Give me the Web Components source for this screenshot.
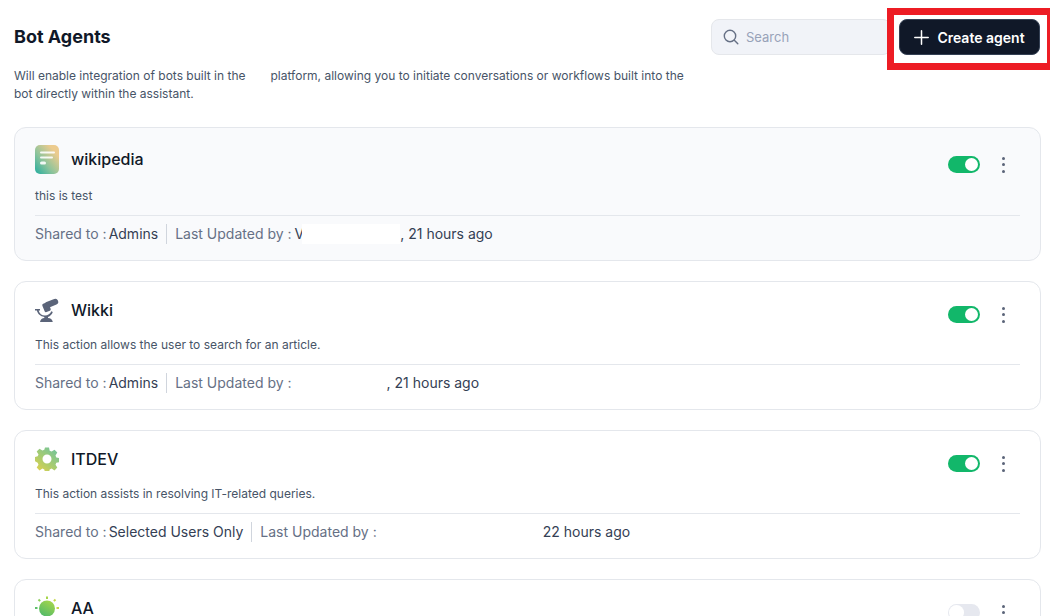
<!DOCTYPE html>
<html><head><meta charset="utf-8"><style>
html,body{margin:0;height:616px;overflow:hidden;background:#fff;font-family:Inter,"Liberation Sans",sans-serif}
</style></head><body>
<agents-page>
<page-header slot="header"></page-header>
<agent-card name="wikipedia" desc="this is test" shared="Admins" featured on>
  <svg slot="icon" width="24" height="29" viewBox="0 0 24 29"><defs><linearGradient id="g1" x1="1" y1="0" x2="0" y2="1"><stop offset=".2" stop-color="#eccb8e"/><stop offset=".6" stop-color="#8fc49b"/><stop offset="1" stop-color="#22ac9f"/></linearGradient></defs><rect width="24" height="29" rx="5" fill="url(#g1)"/><g fill="none" stroke="#fff" stroke-linecap="round" opacity=".9"><path d="M6 7.5h13" stroke-width="2"/><path d="M6 12.5h11" stroke-width="2"/><path d="M6.500 18h3" stroke-width="3"/></g></svg>
  <span slot="updated">V<i-redact w="98" tall></i-redact>, 21 hours ago</span>
</agent-card>
<agent-card name="Wikki" desc="This action allows the user to search for an article." shared="Admins" on>
  <svg slot="icon" width="24" height="24" viewBox="0 0 24 24" fill="#5b6479"><rect x="9.500" y="2.500" width="14" height="6" rx="2.800" transform="rotate(-22 16 5.500)"/><rect x="8.500" y="5" width="6.500" height="9" rx="1.500" transform="rotate(-22 11 10)"/><path d="M0 11h5v1.600H3.600c.7 3 3.200 5 6.400 5 2.800 0 5.400-1.800 6.300-4.300l1.500.6c-.8 2.300-2.600 4.100-4.800 5v1.200c2.500.3 4.300 1.300 4.800 3.900H5c.5-2.600 2.300-3.600 4.300-3.900v-1.100C5.500 18.500 2.600 16 1.900 12.600H0z"/></svg>
  <span slot="updated"><i-redact w="92"></i-redact>, 21 hours ago</span>
</agent-card>
<agent-card name="ITDEV" desc="This action assists in resolving IT-related queries." shared="Selected Users Only" on>
  <svg slot="icon" width="24" height="24" viewBox="0 0 24 24"><defs><linearGradient id="g2" x1=".9" y1="0" x2=".1" y2="1"><stop offset="0" stop-color="#6cc3a0"/><stop offset=".55" stop-color="#a9cc6e"/><stop offset="1" stop-color="#e6d24a"/></linearGradient></defs><path fill="url(#g2)" fill-rule="evenodd" d="M10 .5h4l.7 3.300 1.900.8 2.900-1.800 2.800 2.800-1.800 2.900.8 1.900 3.200.7v4l-3.200.7-.8 1.900 1.800 2.900-2.800 2.800-2.900-1.800-1.900.8-.7 3.200h-4l-.7-3.200-1.900-.8-2.900 1.800-2.800-2.800 1.800-2.900-.8-1.900L-.500 14v-4l3.200-.7.8-1.900-1.800-2.900 2.800-2.800 2.900 1.800 1.900-.8zM12 7.500a4.500 4.500 0 100 9 4.500 4.500 0 000-9z"/></svg>
  <span slot="updated"><i-redact w="163"></i-redact>22 hours ago</span>
</agent-card>
<agent-card name="AA" desc="" shared="Admins">
  <svg slot="icon" width="24" height="24" viewBox="0 0 24 24"><defs><linearGradient id="g3" x1=".8" y1="0" x2=".2" y2="1"><stop offset="0" stop-color="#a6d64a"/><stop offset="1" stop-color="#4fb96a"/></linearGradient></defs><circle cx="12" cy="12.500" r="8" fill="url(#g3)"/><g stroke-width="2"><path d="M12 .5v2.500" stroke="#a6d64a"/><path d="M3.500 3.500l1.600 1.600" stroke="#8ed05c"/><path d="M20.500 3.500l-1.600 1.600" stroke="#c6d84a"/><path d="M0 12h2.500" stroke="#5cc06a"/><path d="M21.500 12h2.500" stroke="#c6d84a"/></g></svg>
  <span slot="updated">22 hours ago</span>
</agent-card>
</agents-page>
<script>
const def=(name,html)=>customElements.define(name,class extends HTMLElement{
  connectedCallback(){ if(this.shadowRoot)return; this.attachShadow({mode:'open'}).innerHTML=typeof html==='function'?html(this):html; }
});
def('agents-page',`<style>:host{display:block;padding:19px 9px 0 14px}
.list{display:flex;flex-direction:column;gap:20px;margin-top:24px}</style>
<slot name="header"></slot><div class="list"><slot></slot></div>`);
def('i-redact',h=>{const t=h.hasAttribute('tall');return `<style>:host{display:inline-block;vertical-align:middle;width:${h.getAttribute('w')}px;height:${t?20:14}px;background:#fff;margin-top:-2px;${t?'margin-left:-2px':''}}</style>`});
def('search-box',`<style>:host{display:flex;align-items:center;gap:7px;box-sizing:border-box;width:180px;height:36px;padding:0 11px;background:#f1f3f8;border:1px solid #e5e7eb;border-radius:8px;font-size:13px;color:#98a2b8;flex:none}
svg{flex:none}</style>
<svg width="16" height="16" viewBox="0 0 16 16" fill="none" stroke="#667085" stroke-width="1.400" stroke-linecap="round"><circle cx="7" cy="7" r="5.700"/><path d="M11.300 11.300l3.500 3.500"/></svg><span>Search</span>`);
def('primary-button',`<style>:host{display:flex;align-items:center;justify-content:center;gap:8px;box-sizing:border-box;width:141px;height:36px;background:#101828;border:1px solid #344054;border-radius:8px;color:#fff;font-size:14px;font-weight:600;flex:none}</style>
<svg width="15" height="15" viewBox="0 0 15 15" stroke="#fff" stroke-width="1.500" stroke-linecap="round"><path d="M7.500 .8v13.400M.8 7.500h13.400"/></svg><span>Create agent</span>`);
def('page-header',`<style>:host{display:block;position:relative}
.top{display:flex;align-items:center;height:36px}
h1{margin:0;font-size:18px;font-weight:700;color:#101828;line-height:38px;flex:1}
.actions{display:flex;gap:8px;margin-right:1px}
p{margin:12px 0 0;font-size:12px;line-height:18px;color:#475467;white-space:nowrap}
.gap{display:inline-block;width:25px}
.mark{position:absolute;left:873px;top:-11px;width:163px;height:62px;box-sizing:border-box;border:solid #ed1c24;border-width:7px 3px 7px 7px;pointer-events:none}</style>
<div class="top"><h1>Bot Agents</h1><div class="actions"><search-box></search-box><primary-button></primary-button></div></div>
<p><span>Will enable integration of bots built in the</span><span class="gap"></span><span>platform, allowing you to initiate conversations or workflows built into the</span><br><span>bot directly within the assistant.</span></p>
<div class="mark"></div>`);
def('agent-toggle',h=>{const on=h.hasAttribute('on');return `<style>:host{display:block;position:relative;width:32px;height:17px;border-radius:9px;background:${on?'#12b76a':'#e6e8ef'}}
i{position:absolute;top:2px;${on?'right:2px':'left:1px;top:1px'};width:${on?13:15}px;height:${on?13:15}px;border-radius:50%;background:#fff}</style><i></i>`});
def('agent-card',h=>{
 const a=n=>h.getAttribute(n)||'',f=h.hasAttribute('featured');
 return `<style>:host{display:block;box-sizing:border-box;border:1px solid #e4e7ec;border-radius:12px;background:${f?'#f9fafc':'#fff'};padding:${f?'17px':'16px'} 20px 0;height:${f?134:129}px}
.head{display:flex;align-items:flex-start}
.icon{width:24px;height:${f?29:24}px;flex:none;margin-right:12px}
.icon ::slotted(svg){display:block}
h2{margin:0;font-size:16px;font-weight:500;color:#101828;line-height:${f?29:24}px;flex:1}
.ctl{display:flex;align-items:center;gap:22px;padding:${f?11:8}px 15px 0 0}
.dots{display:flex;flex-direction:column;gap:3.500px}
.dots b{display:block;width:3px;height:3px;border-radius:50%;background:#5b6479}
.desc{margin:13px 0 0;font-size:12px;line-height:18px;color:#475467;height:18px}
.foot{display:flex;align-items:center;border-top:1px solid #e4e7ec;margin-top:10px;padding-top:8px;font-size:14px;line-height:20px;color:#667085;white-space:nowrap}
.foot span{color:#344054}
.sep{width:1px;height:20px;background:#d0d5dd;margin:0 8px}
.v{color:#344054;margin-left:2px}
.v.u{margin-left:3px}
.foot .k{color:#667085}</style>
<div class="head"><div class="icon"><slot name="icon"></slot></div><h2>${a('name')}</h2>
<div class="ctl"><agent-toggle ${h.hasAttribute('on')?'on':''}></agent-toggle><div class="dots"><b></b><b></b><b></b></div></div></div>
<p class="desc">${a('desc')}</p>
<div class="foot"><span class="k">Shared to :</span><span class="v">${a('shared')}</span><div class="sep"></div><span class="k">Last Updated by :</span><span class="v u"><slot name="updated"></slot></span></div>`});
</script>
</body></html>
